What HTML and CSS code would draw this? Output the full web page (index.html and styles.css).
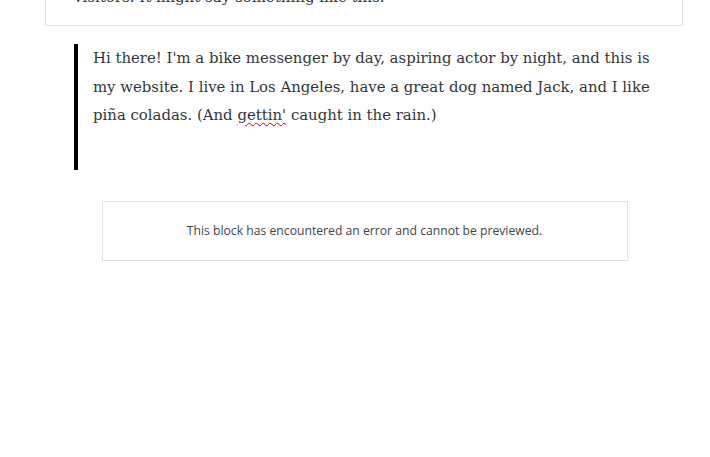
FILE: index.html
```html
<!DOCTYPE html>
<html lang="en">
  <head>
    <meta charset="UTF-8" />
    <meta name="viewport" content="width=device-width, initial-scale=1.0" />
    <title>Sample Page</title>
    <link rel="stylesheet" href="styles.css">
  </head>
  <body>
    <div class="editor">
      <div class="intro-block">
        <p>visitors. It might say something like this.</p>
      </div>
      <blockquote class="quote">
        <p>Hi there! I'm a bike messenger by day, aspiring actor by night, and this is my website. I live in Los Angeles, have a great dog named Jack, and I like piña coladas. (And <span class="misspelled">gettin'</span> caught in the rain.)</p>
      </blockquote>
      <div class="block-error">
        This block has encountered an error and cannot be previewed.
      </div>
    </div>
  </body>
</html>
```

FILE: styles.css
```css
body {
  margin: 0;
  background-color: #fff;
}
.editor {
  display: flex;
  flex-direction: column;
  align-items: center;
  padding-left: 18px;
  font-family: "DejaVu Serif", serif;
  color: #32373c;
}
.intro-block {
  box-sizing: border-box;
  width: 638px;
  margin-top: -17px;
  padding: 0 28px 14px;
  border: 1px solid #e2e4e7;
  border-top: none;
  font-size: 15px;
  line-height: 28px;
}
.intro-block p {
  margin: 0;
}
.quote {
  box-sizing: border-box;
  width: 580px;
  margin: 18px 0 0 0;
  padding: 0 0 40px 15px;
  border-left: 4px solid #000;
  font-size: 14.9px;
  line-height: 28.5px;
}
.quote p {
  margin: 0;
}
.misspelled {
  text-decoration: underline wavy #d00;
  text-decoration-thickness: 1px;
  text-underline-offset: 2px;
}
.block-error {
  box-sizing: border-box;
  width: 526px;
  height: 60px;
  margin: 31px 0 0 1px;
  display: flex;
  align-items: center;
  justify-content: center;
  border: 1px solid #e2e4e7;
  font-family: "Open Sans", sans-serif;
  font-size: 12.2px;
  color: #40464d;
}
```
